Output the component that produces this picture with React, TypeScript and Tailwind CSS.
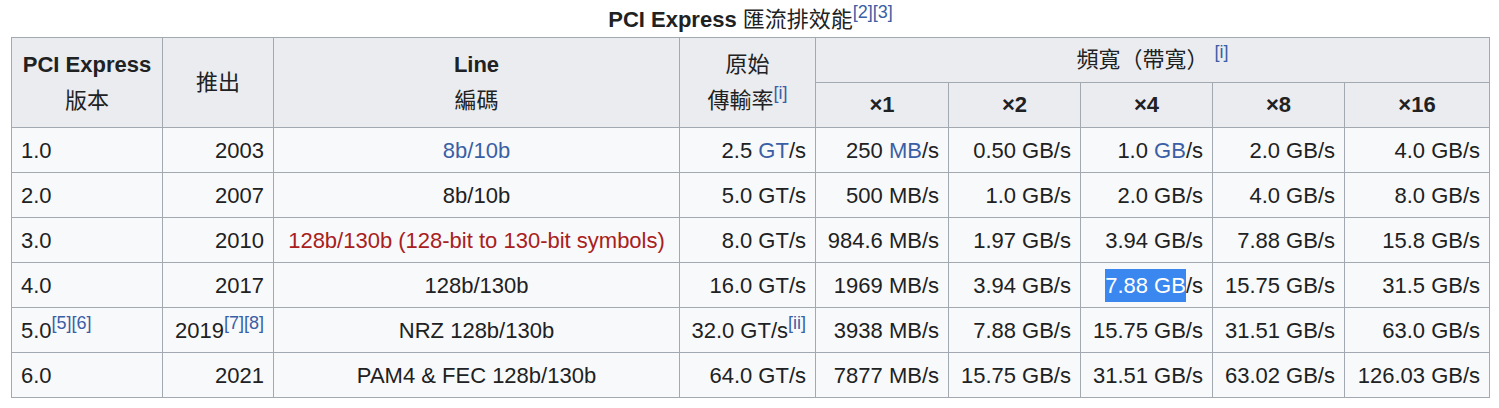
import React from "react";

const L = ({ children }: { children: React.ReactNode }) => (
  <span className="text-[#3a5fa5]">{children}</span>
);

const Sup = ({ children }: { children: React.ReactNode }) => (
  <sup className="text-[18px] leading-none text-[#3a5fa5] font-normal">{children}</sup>
);

const C = ({ children }: { children: React.ReactNode }) => (
  <span className="font-normal">{children}</span>
);

type Cell = React.ReactNode;

const rows: Cell[][] = [
  [
    "1.0",
    "2003",
    <L>8b/10b</L>,
    <>2.5 <L>GT</L>/s</>,
    <>250 <L>MB</L>/s</>,
    "0.50 GB/s",
    <>1.0 <L>GB</L>/s</>,
    "2.0 GB/s",
    "4.0 GB/s",
  ],
  ["2.0", "2007", "8b/10b", "5.0 GT/s", "500 MB/s", "1.0 GB/s", "2.0 GB/s", "4.0 GB/s", "8.0 GB/s"],
  [
    "3.0",
    "2010",
    <span className="text-[#a82020]">128b/130b (128-bit to 130-bit symbols)</span>,
    "8.0 GT/s",
    "984.6 MB/s",
    "1.97 GB/s",
    "3.94 GB/s",
    "7.88 GB/s",
    "15.8 GB/s",
  ],
  [
    "4.0",
    "2017",
    "128b/130b",
    "16.0 GT/s",
    "1969 MB/s",
    "3.94 GB/s",
    <>
      <span className="inline-block bg-[#3a87ef] text-white leading-[33px]">7.88 GB</span>/s
    </>,
    "15.75 GB/s",
    "31.5 GB/s",
  ],
  [
    <>5.0<Sup>[5][6]</Sup></>,
    <>2019<Sup>[7][8]</Sup></>,
    "NRZ 128b/130b",
    <>32.0 GT/s<Sup>[ii]</Sup></>,
    "3938 MB/s",
    "7.88 GB/s",
    "15.75 GB/s",
    "31.51 GB/s",
    "63.0 GB/s",
  ],
  [
    "6.0",
    "2021",
    "PAM4 & FEC 128b/130b",
    "64.0 GT/s",
    "7877 MB/s",
    "15.75 GB/s",
    "31.51 GB/s",
    "63.02 GB/s",
    "126.03 GB/s",
  ],
];

const align = [
  "text-left",
  "text-right",
  "text-center",
  "text-right",
  "text-right",
  "text-right",
  "text-right",
  "text-right",
  "text-right",
];

const th =
  "border border-[#a2a9b1] bg-[#eaecf0] font-bold text-center px-[9px] py-[4px] leading-[36px] align-middle";
const td = "border border-[#a2a9b1] px-[9px] py-[4px] leading-[35px] h-[45px] whitespace-nowrap align-middle";

export default function App() {
  return (
    <div className="w-[1499px] h-[408px] bg-white text-[#202122] text-[22px] font-['Liberation_Sans','Noto_Sans_CJK_TC',sans-serif] overflow-hidden">
      <div className="ml-[11px] w-[1479px]">
        <div className="text-center font-bold leading-[35px] pt-[2px]">
          PCI Express <C>匯流排效能</C>
          <Sup>[2][3]</Sup>
        </div>
        <table className="table-fixed border-collapse w-[1479px] bg-[#f8f9fa]">
          <colgroup>
            <col className="w-[151px]" />
            <col className="w-[111px]" />
            <col className="w-[406px]" />
            <col className="w-[136px]" />
            <col className="w-[133px]" />
            <col className="w-[132px]" />
            <col className="w-[132px]" />
            <col className="w-[132px]" />
            <col className="w-[145px]" />
          </colgroup>
          <thead>
            <tr className="h-[45px]">
              <th rowSpan={2} className={th}>
                PCI Express
                <br />
                <C>版本</C>
              </th>
              <th rowSpan={2} className={th}>
                <C>推出</C>
              </th>
              <th rowSpan={2} className={th}>
                Line
                <br />
                <C>編碼</C>
              </th>
              <th rowSpan={2} className={th}>
                <C>原始</C>
                <br />
                <C>傳輸率</C>
                <Sup>[i]</Sup>
              </th>
              <th colSpan={5} className={th}>
                <C>頻寬（帶寬）</C> <Sup>[i]</Sup>
              </th>
            </tr>
            <tr className="h-[45px]">
              <th className={th}>×1</th>
              <th className={th}>×2</th>
              <th className={th}>×4</th>
              <th className={th}>×8</th>
              <th className={th}>×16</th>
            </tr>
          </thead>
          <tbody>
            {rows.map((r, i) => (
              <tr key={i}>
                {r.map((c, j) => (
                  <td key={j} className={`${td} ${align[j]}`}>
                    {c}
                  </td>
                ))}
              </tr>
            ))}
          </tbody>
        </table>
      </div>
    </div>
  );
}
